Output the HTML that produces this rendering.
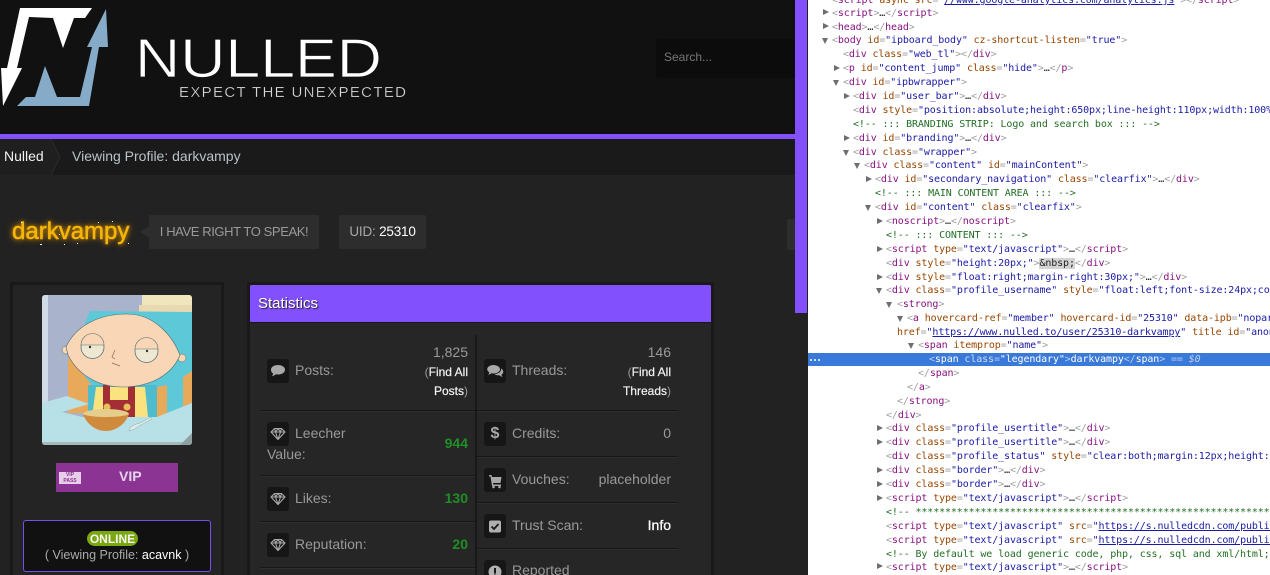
<!DOCTYPE html>
<html><head><meta charset="utf-8"><style>
html,body{margin:0;padding:0;width:1270px;height:575px;overflow:hidden;background:#222;font-family:"Liberation Sans",sans-serif}
#root{position:absolute;left:0;top:0;width:1270px;height:575px;overflow:hidden;background:#222}
.abs,.r,.l,.ib,.x{position:absolute}
.hr{position:absolute;height:1px;background:#171717;border-bottom:1px solid #2e2e2e}
.l{font-size:14px;color:#999;line-height:18px;white-space:pre}
.r{font-size:14px;color:#999;line-height:19px;text-align:right;white-space:pre}
.w{color:#f2f2f2;-webkit-text-stroke:.2px #f2f2f2}.g{color:#1f8f25;font-weight:bold}
.ib{width:22px;height:24px;background:#161616;border-radius:3px}
.ib svg{position:absolute;left:0;top:0}
#dev{position:absolute;left:808px;top:0;width:462px;height:575px;background:#fff;overflow:hidden}
.d{position:absolute;margin-top:1px;height:14px;font:10px/14px "DejaVu Sans Mono",monospace;letter-spacing:-.12px;white-space:pre;color:#222}
.t{color:#881280}.a{color:#994500}.v{color:#1a1aa6}.p{color:#a0a0a0}.c{color:#236e25}
.k{color:#1a1aa6;text-decoration:underline}
.tr,.td{position:absolute;width:0;height:0}
.tr{border-left:6px solid #6e6e6e;border-top:3.5px solid transparent;border-bottom:3.5px solid transparent}
.td{border-top:6px solid #6e6e6e;border-left:3.5px solid transparent;border-right:3.5px solid transparent}
</style></head><body><div id="root">

<div class="abs" style="left:0;top:0;width:795px;height:134px;background:#111"></div>
<div class="abs" style="left:0;top:134px;width:795px;height:5px;background:#8350fd"></div>
<div class="abs" style="left:0;top:139px;width:795px;height:36px;background:#1a1a1a"></div>
<div class="abs" style="left:795px;top:0;width:12px;height:313px;background:#8350fd"></div>

<svg class="abs" style="left:0;top:0" width="420" height="134" viewBox="0 0 420 134">
<polygon fill="#fff" points="20,8 92,8 85,18 74,18 63,48 53,18 29,17 17,68 22,68 3,106 1,68 7,68"/>
<polygon fill="#86abc9" points="106,9 108,47 99,47 89,106 17,106 26,97 35,97 45,66 57,97 80,97 92,47 87,47"/>
<text x="135" y="77" font-family="Liberation Sans" font-size="55" fill="#fff" stroke="#111" stroke-width=".8" textLength="247" lengthAdjust="spacingAndGlyphs">NULLED</text>
<text x="179" y="97" font-family="Liberation Sans" font-size="15" fill="#dedede" stroke="#111" stroke-width=".3" textLength="227" lengthAdjust="spacing">EXPECT THE UNEXPECTED</text>
</svg>

<div class="abs" style="left:656px;top:39px;width:139px;height:39px;background:#0c0c0c;border-radius:3px 0 0 3px"></div>
<div class="abs" style="left:664px;top:50px;font-size:12px;line-height:15px;color:#777">Search...</div>

<svg class="abs" style="left:0;top:139px" width="64" height="36"><polygon points="0,0 51,0 60,18 51,36 0,36" fill="#1f1f1f"/><polyline points="51,0 60,18 51,36" fill="none" stroke="#2b2b2b"/></svg>
<div class="abs" style="left:4px;top:147px;font-size:14px;line-height:18px;color:#f2f2f2">Nulled</div>
<div class="abs" style="left:72px;top:147px;font-size:14px;line-height:18px;color:#b8c2c8">Viewing Profile: darkvampy</div>

<div class="abs" style="left:12px;top:217px;font-size:24px;line-height:30px;color:#f5b50a;-webkit-text-stroke:.5px #f5b50a;text-shadow:0 0 4px #d99400,0 0 8px #b87a00">darkvampy</div>
<svg class="abs" style="left:12px;top:218px" width="124" height="30" fill="#fff"><rect x="9" y="4" width="1" height="1"/><rect x="86" y="4" width="1" height="1"/><rect x="100" y="3" width="1" height="1"/><rect x="28" y="26" width="2" height="1"/><rect x="52" y="26" width="1" height="1"/><rect x="65" y="25" width="1" height="1"/><rect x="116" y="25" width="1" height="1"/><rect x="47" y="16" width="1" height="1"/></svg>

<svg class="abs" style="left:140px;top:224px" width="10" height="16"><polygon points="0,8 9,2 9,14" fill="#2d2d2d"/></svg>
<div class="abs" style="left:149px;top:215px;width:170px;height:34px;background:#2d2d2d;border-radius:2px;font-size:13px;letter-spacing:-.4px;line-height:34px;text-align:center;color:#9a9a9a;white-space:pre">I HAVE RIGHT TO SPEAK!</div>
<div class="abs" style="left:339px;top:215px;width:87px;height:34px;background:#2d2d2d;border-radius:2px;font-size:13.500px;letter-spacing:-.2px;line-height:34px;text-align:center;color:#a8a8a8;white-space:pre">UID: <span style="color:#fff">25310</span></div>
<div class="abs" style="left:787px;top:219px;width:8px;height:31px;background:#2d2d2d;border-radius:2px 0 0 2px"></div>

<!-- left panel -->
<div class="abs" style="left:10px;top:282px;width:208px;height:293px;border:3px solid #191919;border-bottom:0;background:#242424"></div>
<svg class="abs" style="left:42px;top:295px;border-radius:3px" width="150" height="150" viewBox="0 0 150 150">
<rect width="150" height="150" fill="#a9b4cc"/>
<rect x="0" width="6" height="108" fill="#cfdbe6"/>
<rect x="100" width="50" height="11" fill="#efe6bb"/>
<rect x="97" y="10" width="53" height="7" fill="#e8d9b0"/>
<polygon points="43,27 48,16 150,17 150,80 125,95 43,95" fill="#5dc9d8"/>
<polygon points="26,62 50,90 50,118 26,118" fill="#e8a95a"/>
<polygon points="46,90 115,90 115,122 46,122" fill="#4fbccd"/>
<polygon points="115,92 125,90 125,120 115,122" fill="#e8a95a"/>
<polygon points="125,88 141,80 141,112 125,118" fill="#5dc9d8"/>
<polygon points="141,82 150,76 150,108 141,112" fill="#e8a95a"/>
<polygon points="54,92 103,92 106,122 50,122" fill="#fae27f"/>
<rect x="61" y="90" width="7" height="18" fill="#a32f35"/>
<rect x="86" y="90" width="7" height="18" fill="#a32f35"/>
<rect x="61" y="105" width="32" height="18" fill="#a32f35"/>
<circle cx="65" cy="112" r="3.500" fill="#e8c05a"/><circle cx="85" cy="112" r="3.500" fill="#e8c05a"/>
<circle cx="24" cy="55" r="4" fill="#f8d6b6" stroke="#4b6a70" stroke-width=".5"/>
<circle cx="140" cy="63" r="4" fill="#f8d6b6" stroke="#4b6a70" stroke-width=".5"/>
<path d="M24 52C34 30 58 19 85 19c27 0 45 21 53 41-8 20-30 32-57 32-29 0-47-16-55-32z" fill="#f8d6b6" stroke="#4b6a70" stroke-width=".6"/>
<circle cx="50.500" cy="52" r="11.500" fill="#eee8d2" stroke="#5b7075" stroke-width=".8"/>
<circle cx="104.500" cy="56" r="11.500" fill="#eee8d2" stroke="#5b7075" stroke-width=".8"/>
<path d="M39 50a11.500 11.500 0 0 1 23 0zM93 54a11.500 11.500 0 0 1 23 0z" fill="#f8d6b6" stroke="#5b7075" stroke-width=".6"/>
<circle cx="48" cy="52" r="1.200" fill="#333"/><circle cx="105" cy="56" r="1.200" fill="#333"/>
<path d="M73 55l-3 7 3 2M70 68l8 3" stroke="#8a6a55" stroke-width=".7" fill="none"/>
<polygon points="0,108 25,101 47,109 20,117 40,122 115,122 150,108 150,150 0,150" fill="#b8e1e7"/>
<polygon points="0,147 150,147 150,150 0,150" fill="#a6b8ba"/>
<polygon points="138,150 150,138 150,150" fill="#8fa0a0"/>
<ellipse cx="64" cy="119" rx="23" ry="5" fill="#e5cd8c"/>
<path d="M41 119c3 9 12 17 23 17s20-8 23-17c-6 4-40 4-46 0z" fill="#cf8b3b"/>
<path d="M87 136c6-1 8-4 12-6l11-6-1-2-11 6c-4 1-11 3-11 8z" fill="#dfe8e8" stroke="#8aa" stroke-width=".5"/>
</svg>
<div class="abs" style="left:56px;top:463px;width:122px;height:29px;background:#8c3493"></div>
<div class="abs" style="left:59px;top:472px;width:22px;height:12px;background:#e8cfe9;color:#8c3493;font-size:5px;font-weight:bold;line-height:6px;text-align:center">VIP<br>PASS</div>
<div class="abs" style="left:119px;top:468px;font-size:14px;font-weight:bold;line-height:16px;color:#e3d4ea">VIP</div>
<div class="abs" style="left:23px;top:520px;width:186px;height:50px;border:1px solid #7a4df0;border-radius:3px;background:#111"></div>
<div class="abs" style="left:87px;top:531px;width:51px;height:15px;border-radius:8px;background:#7ba70f;color:#f4f4f4;font-size:12px;line-height:16px;font-weight:bold;text-align:center">ONLINE</div>
<div class="abs" style="left:23px;top:546px;width:188px;text-align:center;font-size:12.500px;line-height:19px;color:#aaa;white-space:pre">( Viewing Profile: <span style="color:#fff">acavnk</span> )</div>

<!-- stats panel -->
<div class="abs" style="left:247px;top:282px;width:461px;height:293px;border:3px solid #191919;border-bottom:0;background:#262626"></div>
<div class="abs" style="left:250px;top:285px;width:461px;height:37px;background:#8350fd;border-bottom:1px solid #171717;border-radius:2px 2px 0 0"></div>
<div class="abs" style="left:258px;top:294px;font-size:15px;line-height:19px;color:#fff;text-shadow:1px 1px 1px #222">Statistics</div>
<div class="abs" style="left:475px;top:335px;width:2px;height:240px;background:#181818"></div>

<div class="hr" style="left:260px;top:410px;width:215px"></div>
<div class="hr" style="left:260px;top:475px;width:215px"></div>
<div class="hr" style="left:260px;top:521px;width:215px"></div>
<div class="hr" style="left:260px;top:567px;width:215px"></div>
<div class="hr" style="left:477px;top:410px;width:201px"></div>
<div class="hr" style="left:477px;top:456px;width:201px"></div>
<div class="hr" style="left:477px;top:502px;width:201px"></div>
<div class="hr" style="left:477px;top:548px;width:201px"></div>

<div class="ib" style="left:267px;top:359px"><svg width="22" height="24" viewBox="0 0 22 24"><path d="M11 6c4 0 7 2 7 4.700s-3 4.800-7 4.800c-.8 0-1.500 0-2.200-.2-1 1-2.500 1.700-4 2 .8-.8 1.300-2 1.400-3C5 14.200 4 12.500 4 10.700 4 8 7 6 11 6z" fill="#a8a8a8"/></svg></div>
<div class="l" style="left:295px;top:361px">Posts:</div>
<div class="r" style="right:802px;top:342px;width:90px;line-height:20px;font-size:14px">1,825</div>
<div class="r" style="right:802px;top:363px;font-size:12px">(<span class="w">Find All</span></div>
<div class="r" style="right:802px;top:382px;font-size:12px"><span class="w">Posts</span>)</div>

<div class="ib" style="left:267px;top:422px"><svg width="22" height="24" viewBox="0 0 22 24"><g fill="none" stroke="#a8a8a8" stroke-width="1.100" stroke-linejoin="round"><path d="M7.500 6.500h7l3.500 3.500-7 7.500L4 10z"/><path d="M4 10h14M8.500 10L11 17.500 13.500 10M7.500 6.500L8.500 10 11 6.500 13.500 10l1-3.500"/></g></svg></div>
<div class="l" style="left:295px;top:424px">Leecher</div>
<div class="l" style="left:267px;top:445px">Value:</div>
<div class="r g" style="right:802px;top:434px">944</div>

<div class="ib" style="left:267px;top:487px"><svg width="22" height="24" viewBox="0 0 22 24"><g fill="none" stroke="#a8a8a8" stroke-width="1.100" stroke-linejoin="round"><path d="M7.500 6.500h7l3.500 3.500-7 7.500L4 10z"/><path d="M4 10h14M8.500 10L11 17.500 13.500 10M7.500 6.500L8.500 10 11 6.500 13.500 10l1-3.500"/></g></svg></div>
<div class="l" style="left:295px;top:489px">Likes:</div>
<div class="r g" style="right:802px;top:489px">130</div>

<div class="ib" style="left:267px;top:533px"><svg width="22" height="24" viewBox="0 0 22 24"><g fill="none" stroke="#a8a8a8" stroke-width="1.100" stroke-linejoin="round"><path d="M7.500 6.500h7l3.500 3.500-7 7.500L4 10z"/><path d="M4 10h14M8.500 10L11 17.500 13.500 10M7.500 6.500L8.500 10 11 6.500 13.500 10l1-3.500"/></g></svg></div>
<div class="l" style="left:295px;top:535px">Reputation:</div>
<div class="r g" style="right:802px;top:535px">20</div>

<div class="ib" style="left:484px;top:359px"><svg width="22" height="24" viewBox="0 0 22 24"><path d="M9.500 6C13 6 16 8 16 10.300s-3 4.200-6.500 4.200c-.7 0-1.400 0-2-.2-1 .8-2 1.200-3.300 1.400.6-.7 1-1.600 1.100-2.400C4 12.600 3.200 11.500 3.200 10.300 3.200 8 6 6 9.500 6z" fill="#a8a8a8"/><path d="M17 9.500c1.500.8 2.300 2 2.300 3.300 0 1.100-.7 2.200-1.800 2.900.1.800.5 1.500 1 2.200-1.300-.2-2.300-.8-3.200-1.600-1.800.3-3.600-.3-4.800-1.300 3.500 0 7-2 6.500-5.500z" fill="#a8a8a8"/></svg></div>
<div class="l" style="left:512px;top:361px">Threads:</div>
<div class="r" style="right:599px;top:342px;line-height:20px">146</div>
<div class="r" style="right:599px;top:363px;font-size:12px">(<span class="w">Find All</span></div>
<div class="r" style="right:599px;top:382px;font-size:12px"><span class="w">Threads</span>)</div>

<div class="ib" style="left:484px;top:422px"><div class="x" style="left:0;top:2px;width:22px;text-align:center;font-size:16px;line-height:20px;font-weight:bold;color:#a8a8a8">$</div></div>
<div class="l" style="left:512px;top:424px">Credits:</div>
<div class="r" style="right:599px;top:424px">0</div>

<div class="ib" style="left:484px;top:468px"><svg width="22" height="24" viewBox="0 0 22 24"><path d="M5 7h2.500l.5 2h9.500l-1 6H9l.3 1.500H17v1.500H8L6.500 8.500H5z" fill="#a8a8a8"/><circle cx="9.500" cy="19" r="1.300" fill="#a8a8a8"/><circle cx="15.500" cy="19" r="1.300" fill="#a8a8a8"/></svg></div>
<div class="l" style="left:512px;top:470px">Vouches:</div>
<div class="r" style="right:599px;top:470px">placeholder</div>

<div class="ib" style="left:484px;top:514px"><svg width="22" height="24" viewBox="0 0 22 24"><rect x="5" y="6.500" width="12" height="12" rx="2" fill="#b0b0b0"/><path d="M7.500 12.500l2.500 2.500 4.500-5" fill="none" stroke="#161616" stroke-width="1.800"/></svg></div>
<div class="l" style="left:512px;top:516px">Trust Scan:</div>
<div class="r" style="right:599px;top:516px;color:#fff;font-size:14px;-webkit-text-stroke:.3px #fff">Info</div>

<div class="ib" style="left:484px;top:560px"><svg width="22" height="24" viewBox="0 0 22 24"><circle cx="11" cy="12" r="6.500" fill="#b0b0b0"/><rect x="10" y="8" width="2" height="5.500" fill="#161616"/><rect x="10" y="14.500" width="2" height="2" fill="#161616"/></svg></div>
<div class="l" style="left:512px;top:561px">Reported</div>

<!-- devtools -->
<div id="dev"></div>
<div class="abs" style="left:808px;top:353px;width:462px;height:13px;background:#3879d9"></div>
<div class="abs" style="left:810px;top:359px;width:2px;height:2px;background:#cfe0f7;box-shadow:4px 0 #cfe0f7,8px 0 #cfe0f7"></div>

<div class="tr" style="left:823px;top:9px"></div>
<div class="tr" style="left:823px;top:23px"></div>
<div class="td" style="left:822px;top:38px"></div>
<div class="tr" style="left:834px;top:65px"></div>
<div class="td" style="left:833px;top:80px"></div>
<div class="tr" style="left:844px;top:93px"></div>
<div class="tr" style="left:844px;top:135px"></div>
<div class="td" style="left:843px;top:150px"></div>
<div class="td" style="left:854px;top:163px"></div>
<div class="tr" style="left:866px;top:176px"></div>
<div class="td" style="left:865px;top:205px"></div>
<div class="tr" style="left:877px;top:218px"></div>
<div class="tr" style="left:877px;top:246px"></div>
<div class="tr" style="left:877px;top:274px"></div>
<div class="td" style="left:876px;top:288px"></div>
<div class="td" style="left:886px;top:302px"></div>
<div class="td" style="left:897px;top:316px"></div>
<div class="td" style="left:908px;top:343px"></div>
<div class="tr" style="left:877px;top:425px"></div>
<div class="tr" style="left:877px;top:439px"></div>
<div class="tr" style="left:877px;top:467px"></div>
<div class="tr" style="left:877px;top:481px"></div>
<div class="tr" style="left:877px;top:495px"></div>
<div class="tr" style="left:877px;top:563px"></div>

<div class="d" style="left:832px;top:-7px;width:438px;overflow:hidden"><span class="p">&lt;</span><span class="t">script</span> <span class="a">async</span> <span class="a">src</span><span class="p">=</span><span class="v">"</span><span class="k">//www.google-analytics.com/analytics.js</span><span class="v">"</span><span class="p">&gt;&lt;/</span><span class="t">script</span><span class="p">&gt;</span></div>
<div class="d" style="left:832px;top:6px"><span class="p">&lt;</span><span class="t">script</span><span class="p">&gt;</span>…<span class="p">&lt;/</span><span class="t">script</span><span class="p">&gt;</span></div>
<div class="d" style="left:832px;top:20px"><span class="p">&lt;</span><span class="t">head</span><span class="p">&gt;</span>…<span class="p">&lt;/</span><span class="t">head</span><span class="p">&gt;</span></div>
<div class="d" style="left:832px;top:33px"><span class="p">&lt;</span><span class="t">body</span> <span class="a">id</span><span class="p">=</span><span class="v">"ipboard_body"</span> <span class="a">cz-shortcut-listen</span><span class="p">=</span><span class="v">"true"</span><span class="p">&gt;</span></div>
<div class="d" style="left:843px;top:47px"><span class="p">&lt;</span><span class="t">div</span> <span class="a">class</span><span class="p">=</span><span class="v">"web_tl"</span><span class="p">&gt;&lt;/</span><span class="t">div</span><span class="p">&gt;</span></div>
<div class="d" style="left:843px;top:61px"><span class="p">&lt;</span><span class="t">p</span> <span class="a">id</span><span class="p">=</span><span class="v">"content_jump"</span> <span class="a">class</span><span class="p">=</span><span class="v">"hide"</span><span class="p">&gt;</span>…<span class="p">&lt;/</span><span class="t">p</span><span class="p">&gt;</span></div>
<div class="d" style="left:843px;top:75px"><span class="p">&lt;</span><span class="t">div</span> <span class="a">id</span><span class="p">=</span><span class="v">"ipbwrapper"</span><span class="p">&gt;</span></div>
<div class="d" style="left:853px;top:89px"><span class="p">&lt;</span><span class="t">div</span> <span class="a">id</span><span class="p">=</span><span class="v">"user_bar"</span><span class="p">&gt;</span>…<span class="p">&lt;/</span><span class="t">div</span><span class="p">&gt;</span></div>
<div class="d" style="left:853px;top:103px;width:417px;overflow:hidden"><span class="p">&lt;</span><span class="t">div</span> <span class="a">style</span><span class="p">=</span><span class="v">"position:absolute;height:650px;line-height:110px;width:100%</span></div>
<div class="d c" style="left:853px;top:117px">&lt;!-- ::: BRANDING STRIP: Logo and search box ::: --&gt;</div>
<div class="d" style="left:853px;top:131px"><span class="p">&lt;</span><span class="t">div</span> <span class="a">id</span><span class="p">=</span><span class="v">"branding"</span><span class="p">&gt;</span>…<span class="p">&lt;/</span><span class="t">div</span><span class="p">&gt;</span></div>
<div class="d" style="left:853px;top:145px"><span class="p">&lt;</span><span class="t">div</span> <span class="a">class</span><span class="p">=</span><span class="v">"wrapper"</span><span class="p">&gt;</span></div>
<div class="d" style="left:864px;top:158px"><span class="p">&lt;</span><span class="t">div</span> <span class="a">class</span><span class="p">=</span><span class="v">"content"</span> <span class="a">id</span><span class="p">=</span><span class="v">"mainContent"</span><span class="p">&gt;</span></div>
<div class="d" style="left:875px;top:172px"><span class="p">&lt;</span><span class="t">div</span> <span class="a">id</span><span class="p">=</span><span class="v">"secondary_navigation"</span> <span class="a">class</span><span class="p">=</span><span class="v">"clearfix"</span><span class="p">&gt;</span>…<span class="p">&lt;/</span><span class="t">div</span><span class="p">&gt;</span></div>
<div class="d c" style="left:875px;top:186px">&lt;!-- ::: MAIN CONTENT AREA ::: --&gt;</div>
<div class="d" style="left:875px;top:200px"><span class="p">&lt;</span><span class="t">div</span> <span class="a">id</span><span class="p">=</span><span class="v">"content"</span> <span class="a">class</span><span class="p">=</span><span class="v">"clearfix"</span><span class="p">&gt;</span></div>
<div class="d" style="left:886px;top:214px"><span class="p">&lt;</span><span class="t">noscript</span><span class="p">&gt;</span>…<span class="p">&lt;/</span><span class="t">noscript</span><span class="p">&gt;</span></div>
<div class="d c" style="left:886px;top:228px">&lt;!-- ::: CONTENT ::: --&gt;</div>
<div class="d" style="left:886px;top:242px"><span class="p">&lt;</span><span class="t">script</span> <span class="a">type</span><span class="p">=</span><span class="v">"text/javascript"</span><span class="p">&gt;</span>…<span class="p">&lt;/</span><span class="t">script</span><span class="p">&gt;</span></div>
<div class="d" style="left:886px;top:256px"><span class="p">&lt;</span><span class="t">div</span> <span class="a">style</span><span class="p">=</span><span class="v">"height:20px;"</span><span class="p">&gt;</span><span style="background:#d4d4d4">&amp;nbsp;</span><span class="p">&lt;/</span><span class="t">div</span><span class="p">&gt;</span></div>
<div class="d" style="left:886px;top:270px"><span class="p">&lt;</span><span class="t">div</span> <span class="a">style</span><span class="p">=</span><span class="v">"float:right;margin-right:30px;"</span><span class="p">&gt;</span>…<span class="p">&lt;/</span><span class="t">div</span><span class="p">&gt;</span></div>
<div class="d" style="left:886px;top:283px;width:384px;overflow:hidden"><span class="p">&lt;</span><span class="t">div</span> <span class="a">class</span><span class="p">=</span><span class="v">"profile_username"</span> <span class="a">style</span><span class="p">=</span><span class="v">"float:left;font-size:24px;color</span></div>
<div class="d" style="left:897px;top:297px"><span class="p">&lt;</span><span class="t">strong</span><span class="p">&gt;</span></div>
<div class="d" style="left:907px;top:311px;width:363px;overflow:hidden"><span class="p">&lt;</span><span class="t">a</span> <span class="a">hovercard-ref</span><span class="p">=</span><span class="v">"member"</span> <span class="a">hovercard-id</span><span class="p">=</span><span class="v">"25310"</span> <span class="a">data-ipb</span><span class="p">=</span><span class="v">"nopar</span></div>
<div class="d" style="left:897px;top:325px;width:373px;overflow:hidden"><span class="a">href</span><span class="p">=</span><span class="v">"</span><span class="k">https://www.nulled.to/user/25310-darkvampy</span><span class="v">"</span> <span class="a">title</span> <span class="a">id</span><span class="p">=</span><span class="v">"anon</span></div>
<div class="d" style="left:918px;top:338px"><span class="p">&lt;</span><span class="t">span</span> <span class="a">itemprop</span><span class="p">=</span><span class="v">"name"</span><span class="p">&gt;</span></div>
<div class="d" style="left:929px;top:352px;color:#fff"><span style="color:#b9d0f0">&lt;</span>span <span style="color:#cfdff5">class</span><span style="color:#b9d0f0">=</span>"legendary"<span style="color:#b9d0f0">&gt;</span>darkvampy<span style="color:#b9d0f0">&lt;/</span>span<span style="color:#b9d0f0">&gt;</span><span style="color:#b9d0f0"> == <i>$0</i></span></div>
<div class="d" style="left:918px;top:366px"><span class="p">&lt;/</span><span class="t">span</span><span class="p">&gt;</span></div>
<div class="d" style="left:907px;top:380px"><span class="p">&lt;/</span><span class="t">a</span><span class="p">&gt;</span></div>
<div class="d" style="left:897px;top:394px"><span class="p">&lt;/</span><span class="t">strong</span><span class="p">&gt;</span></div>
<div class="d" style="left:886px;top:408px"><span class="p">&lt;/</span><span class="t">div</span><span class="p">&gt;</span></div>
<div class="d" style="left:886px;top:421px"><span class="p">&lt;</span><span class="t">div</span> <span class="a">class</span><span class="p">=</span><span class="v">"profile_usertitle"</span><span class="p">&gt;</span>…<span class="p">&lt;/</span><span class="t">div</span><span class="p">&gt;</span></div>
<div class="d" style="left:886px;top:435px"><span class="p">&lt;</span><span class="t">div</span> <span class="a">class</span><span class="p">=</span><span class="v">"profile_usertitle"</span><span class="p">&gt;</span>…<span class="p">&lt;/</span><span class="t">div</span><span class="p">&gt;</span></div>
<div class="d" style="left:886px;top:449px;width:384px;overflow:hidden"><span class="p">&lt;</span><span class="t">div</span> <span class="a">class</span><span class="p">=</span><span class="v">"profile_status"</span> <span class="a">style</span><span class="p">=</span><span class="v">"clear:both;margin:12px;height:40px</span></div>
<div class="d" style="left:886px;top:463px"><span class="p">&lt;</span><span class="t">div</span> <span class="a">class</span><span class="p">=</span><span class="v">"border"</span><span class="p">&gt;</span>…<span class="p">&lt;/</span><span class="t">div</span><span class="p">&gt;</span></div>
<div class="d" style="left:886px;top:477px"><span class="p">&lt;</span><span class="t">div</span> <span class="a">class</span><span class="p">=</span><span class="v">"border"</span><span class="p">&gt;</span>…<span class="p">&lt;/</span><span class="t">div</span><span class="p">&gt;</span></div>
<div class="d" style="left:886px;top:491px"><span class="p">&lt;</span><span class="t">script</span> <span class="a">type</span><span class="p">=</span><span class="v">"text/javascript"</span><span class="p">&gt;</span>…<span class="p">&lt;/</span><span class="t">script</span><span class="p">&gt;</span></div>
<div class="d c" style="left:886px;top:505px;width:384px;overflow:hidden">&lt;!-- ********************************************************************</div>
<div class="d" style="left:886px;top:519px;width:384px;overflow:hidden"><span class="p">&lt;</span><span class="t">script</span> <span class="a">type</span><span class="p">=</span><span class="v">"text/javascript"</span> <span class="a">src</span><span class="p">=</span><span class="v">"</span><span class="k">https://s.nulledcdn.com/public</span></div>
<div class="d" style="left:886px;top:533px;width:384px;overflow:hidden"><span class="p">&lt;</span><span class="t">script</span> <span class="a">type</span><span class="p">=</span><span class="v">"text/javascript"</span> <span class="a">src</span><span class="p">=</span><span class="v">"</span><span class="k">https://s.nulledcdn.com/public</span></div>
<div class="d c" style="left:886px;top:547px;width:384px;overflow:hidden">&lt;!-- By default we load generic code, php, css, sql and xml/html; --&gt;</div>
<div class="d" style="left:886px;top:560px"><span class="p">&lt;</span><span class="t">script</span> <span class="a">type</span><span class="p">=</span><span class="v">"text/javascript"</span><span class="p">&gt;</span>…<span class="p">&lt;/</span><span class="t">script</span><span class="p">&gt;</span></div>
</div></body></html>
